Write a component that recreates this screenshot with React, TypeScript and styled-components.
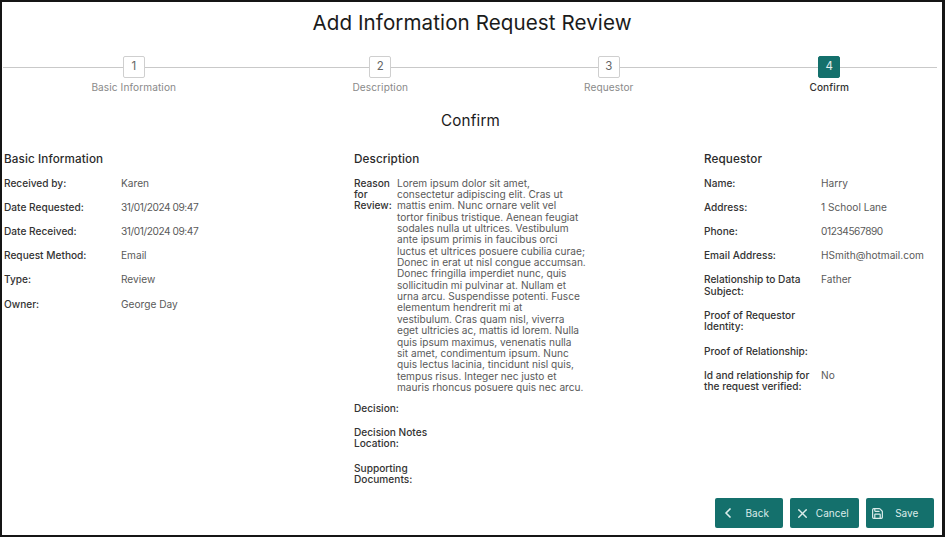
import React from "react";
import styled, { createGlobalStyle } from "styled-components";
import { ChevronLeft, X, Save } from "lucide-react";

const Global = createGlobalStyle`
  html, body { margin: 0; padding: 0; background: #fff; }
  * { box-sizing: border-box; }
`;

const Page = styled.div`
  width: 945px;
  height: 537px;
  border: solid #151515;
  border-width: 2px 3px 2px 2px;
  display: flex;
  flex-direction: column;
  font-family: Inter, "Open Sans", sans-serif;
  font-size: 10.15px;
  line-height: 11.35px;
  color: #3a3a3a;
  overflow: hidden;
`;

const Title = styled.h1`
  margin: 8px 0 0;
  height: 26px;
  text-align: center;
  font-size: 20.6px;
  line-height: 26px;
  font-weight: 400;
  letter-spacing: 0.08px;
  color: #1b1b1b;
`;

const Stepper = styled.div`
  position: relative;
  margin: 20px 5px 0 1px;
  display: flex;
  justify-content: space-around;
  &::before {
    content: "";
    position: absolute;
    left: 0;
    right: 0;
    top: 11px;
    height: 1px;
    background: #c9c9c9;
  }
`;

const Step = styled.div<{ $w: number }>`
  position: relative;
  width: ${(p) => p.$w}px;
  display: flex;
  flex-direction: column;
  align-items: center;
`;

const StepBox = styled.div<{ $active?: boolean }>`
  width: 22px;
  height: 22px;
  border-radius: 2px;
  border: 1px solid ${(p) => (p.$active ? "#14706c" : "#cfcfcf")};
  background: ${(p) => (p.$active ? "#14706c" : "#fff")};
  color: ${(p) => (p.$active ? "#e6f1f0" : "#666")};
  display: flex;
  align-items: center;
  justify-content: center;
  font-size: 11.5px;
`;

const StepLabel = styled.div<{ $active?: boolean }>`
  margin-top: 3px;
  white-space: nowrap;
  font-size: 10.1px;
  line-height: 12.7px;
  letter-spacing: 0.1px;
  font-weight: ${(p) => (p.$active ? 500 : 400)};
  color: ${(p) => (p.$active ? "#333" : "#8a8a8a")};
`;

const Heading = styled.h2`
  margin: 17px 0 0;
  padding-right: 3px;
  text-align: center;
  font-size: 15.2px;
  line-height: 20px;
  font-weight: 400;
  letter-spacing: 0.2px;
  color: #1b1b1b;
`;

const Columns = styled.div`
  margin-top: 20px;
  padding-left: 2px;
  display: grid;
  grid-template-columns: 350px 350px 1fr;
`;

const Column = styled.section``;

const ColumnTitle = styled.h3`
  margin: 0 0 11px;
  font-size: 11.7px;
  line-height: 16px;
  font-weight: 500;
  letter-spacing: 0.1px;
  color: #2a2a2a;
`;

const Row = styled.div<{ $gap?: number }>`
  display: flex;
  margin-bottom: ${(p) => p.$gap ?? 12.85}px;
`;

const Label = styled.div<{ $w?: number; $pad?: number }>`
  flex: none;
  width: ${(p) => p.$w ?? 117}px;
  padding-right: ${(p) => p.$pad ?? 4}px;
  font-weight: 500;
  color: #333;
`;

const Value = styled.div<{ $w?: number; $numeric?: boolean }>`
  width: ${(p) => (p.$w ? `${p.$w}px` : "auto")};
  color: #5a5a5a;
  white-space: pre-line;
  letter-spacing: ${(p) => (p.$numeric ? "-0.42px" : "normal")};
`;

const Footer = styled.div`
  margin-top: auto;
  padding: 0 8px 7px 0;
  display: flex;
  justify-content: flex-end;
  gap: 7px;
`;

const ActionButton = styled.button`
  width: 68.5px;
  height: 30px;
  padding: 0 4px 0 5px;
  border: 0;
  border-radius: 2px;
  background: #14706c;
  color: #dcecea;
  font-family: inherit;
  font-size: 10px;
  display: flex;
  align-items: center;
`;

const ButtonText = styled.span`
  flex: 1;
  text-align: center;
`;

const basic = [
  ["Received by:", "Karen"],
  ["Date Requested:", "31/01/2024 09:47"],
  ["Date Received:", "31/01/2024 09:47"],
  ["Request Method:", "Email"],
  ["Type:", "Review"],
  ["Owner:", "George Day"],
];

const requestor = [
  ["Name:", "Harry"],
  ["Address:", "1 School Lane"],
  ["Phone:", "01234567890"],
  ["Email Address:", "HSmith@hotmail.com"],
  ["Relationship to Data Subject:", "Father"],
  ["Proof of Requestor Identity:", ""],
  ["Proof of Relationship:", ""],
  ["Id and relationship for the request verified:", "No"],
];

const lorem = `Lorem ipsum dolor sit amet,
consectetur adipiscing elit. Cras ut
mattis enim. Nunc ornare velit vel
tortor finibus tristique. Aenean feugiat
sodales nulla ut ultrices. Vestibulum
ante ipsum primis in faucibus orci
luctus et ultrices posuere cubilia curae;
Donec in erat ut nisl congue accumsan.
Donec fringilla imperdiet nunc, quis
sollicitudin mi pulvinar at. Nullam et
urna arcu. Suspendisse potenti. Fusce
elementum hendrerit mi at
vestibulum. Cras quam nisl, viverra
eget ultricies ac, mattis id lorem. Nulla
quis ipsum maximus, venenatis nulla
sit amet, condimentum ipsum. Nunc
quis lectus lacinia, tincidunt nisl quis,
tempus risus. Integer nec justo et
mauris rhoncus posuere quis nec arcu.`;

const isNumeric = (v: string) => /^[\d/: ]+$/.test(v);

const steps = [
  { n: 1, label: "Basic Information", w: 85 },
  { n: 2, label: "Description", w: 55 },
  { n: 3, label: "Requestor", w: 49 },
  { n: 4, label: "Confirm", w: 39, active: true },
];

export default function App() {
  return (
    <Page>
      <Global />
      <Title>Add Information Request Review</Title>
      <Stepper>
        {steps.map((s) => (
          <Step key={s.n} $w={s.w}>
            <StepBox $active={s.active}>{s.n}</StepBox>
            <StepLabel $active={s.active}>{s.label}</StepLabel>
          </Step>
        ))}
      </Stepper>
      <Heading>Confirm</Heading>
      <Columns>
        <Column>
          <ColumnTitle>Basic Information</ColumnTitle>
          {basic.map(([l, v]) => (
            <Row key={l}>
              <Label>{l}</Label>
              <Value $numeric={isNumeric(v)}>{v}</Value>
            </Row>
          ))}
        </Column>
        <Column>
          <ColumnTitle>Description</ColumnTitle>
          <Row $gap={9.6}>
            <Label $w={43} $pad={2}>Reason for Review:</Label>
            <Value $w={200}>{lorem}</Value>
          </Row>
          <Row>
            <Label $w={84}>Decision:</Label>
          </Row>
          <Row>
            <Label $w={84}>Decision Notes Location:</Label>
          </Row>
          <Row>
            <Label $w={84}>Supporting Documents:</Label>
          </Row>
        </Column>
        <Column>
          <ColumnTitle>Requestor</ColumnTitle>
          {requestor.map(([l, v]) => (
            <Row key={l}>
              <Label>{l}</Label>
              <Value $numeric={isNumeric(v)}>{v}</Value>
            </Row>
          ))}
        </Column>
      </Columns>
      <Footer>
        <ActionButton>
          <ChevronLeft size={16} strokeWidth={2.6} />
          <ButtonText>Back</ButtonText>
        </ActionButton>
        <ActionButton>
          <X size={15} strokeWidth={2.2} />
          <ButtonText>Cancel</ButtonText>
        </ActionButton>
        <ActionButton>
          <Save size={13} strokeWidth={2.2} />
          <ButtonText>Save</ButtonText>
        </ActionButton>
      </Footer>
    </Page>
  );
}
